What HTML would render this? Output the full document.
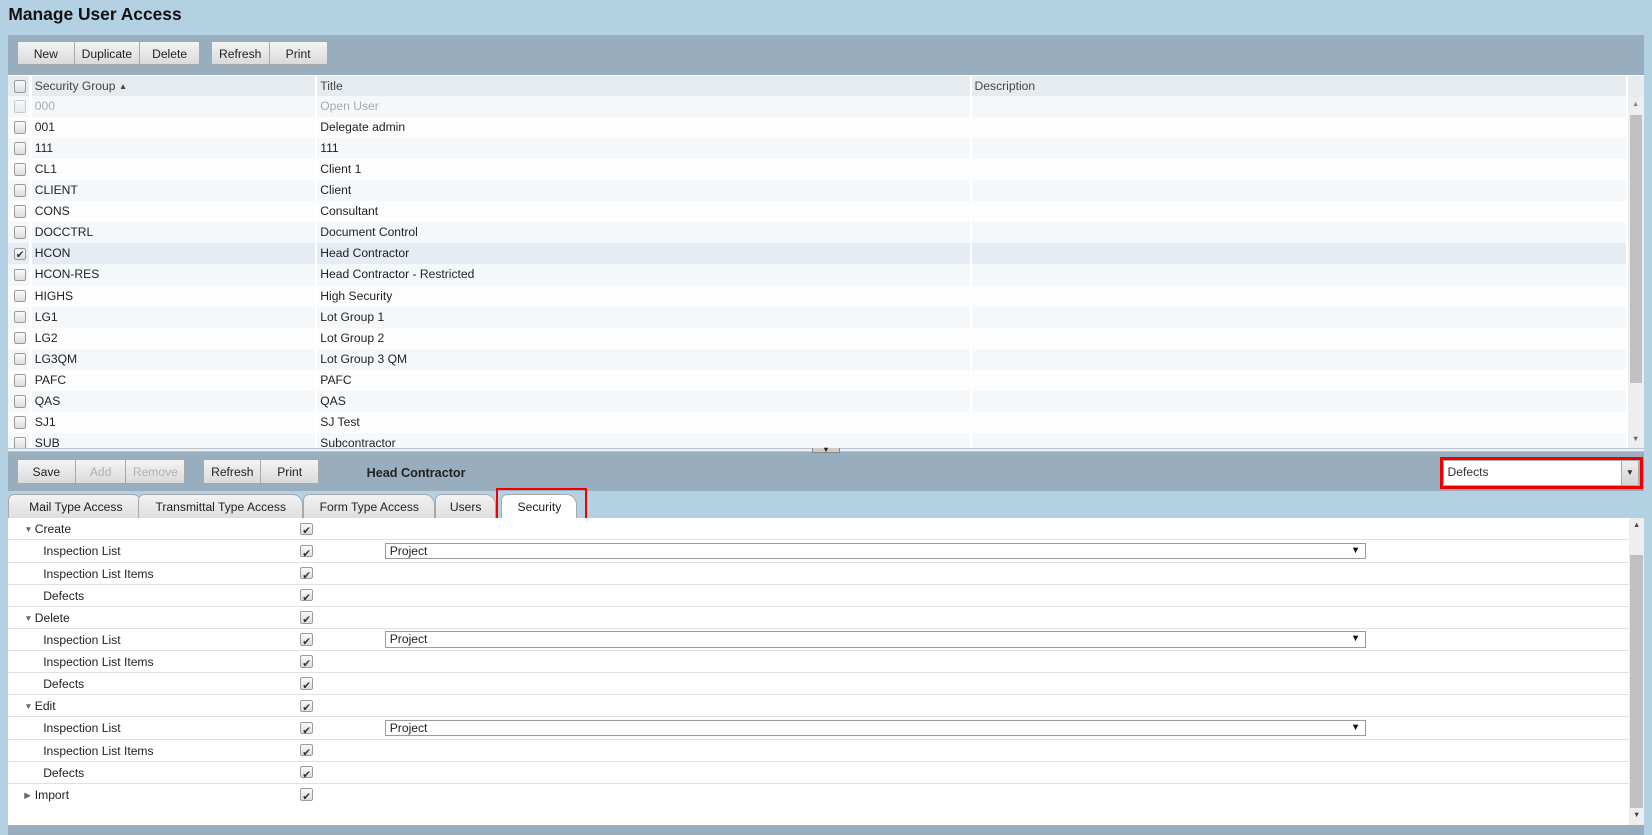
<!DOCTYPE html>
<html><head><meta charset="utf-8"><style>
html{zoom:1.05357}
body{margin:0;width:1568px;height:793px;background:#b4d1e4;font-family:"Liberation Sans",sans-serif;font-size:11.5px;color:#222;position:relative;overflow:hidden}
.abs{position:absolute}
h1{position:absolute;left:8px;top:4px;margin:0;font-size:16.5px;font-weight:bold;color:#111}
.panel{left:8px;top:33px;width:1552px;height:760px;background:#98aebf}
.btn{position:absolute;top:0;height:23px;line-height:23px;text-align:center;background:linear-gradient(#f4f4f4,#dadada);border:1px solid #a8a8a8;box-sizing:border-box;color:#222;font-size:11.5px}
.dis{color:#b0b0b0}
.grid{left:8px;top:71px;width:1552px;height:354px;background:#fdfdfd;overflow:hidden}
.row{position:absolute;left:0;width:1537px;height:20px;line-height:20px}
.row span{position:absolute;top:0}
.cb{position:absolute;width:10px;height:10px;border:1px solid #9a9a9a;border-radius:2px;background:linear-gradient(#fafafa,#dcdcdc)}
.cb.k::after{content:"✔";position:absolute;left:1px;top:-3px;font-size:10px;color:#333}
.sep{position:absolute;top:0;width:2px;height:354px;background:#fff}
.srow{position:absolute;left:0;width:1538px;height:21px;line-height:21px;border-bottom:1px solid #dde1e4;box-sizing:border-box}
.srow span{position:absolute;top:0}
.sel{position:absolute;left:357px;top:2px;width:932px;height:16px;border:1px solid #9a9a9a;background:#fff;box-sizing:border-box;line-height:14px;padding-left:4px}
.sel::after{content:"▼";position:absolute;right:5px;top:0;font-size:9px;color:#111}
.tab{position:absolute;top:469px;height:23px;line-height:23px;background:linear-gradient(#f2f2f2,#dedede);border:1px solid #a8a8a8;border-bottom:none;border-radius:6px 10px 0 0;box-sizing:border-box;text-align:center}
</style></head><body>
<h1>Manage User Access</h1>
<div class="abs panel"></div>
<div class="abs" style="left:16px;top:39px">
<div class="btn" style="left:0;width:55px">New</div>
<div class="btn" style="left:54px;width:63px">Duplicate</div>
<div class="btn" style="left:116px;width:58px">Delete</div>
<div class="btn" style="left:184px;width:56px">Refresh</div>
<div class="btn" style="left:239px;width:56px">Print</div>
</div>
<div class="abs grid">
<div class="row" style="top:1px;background:#e6ebef;width:1552px;color:#444"><div class="cb" style="left:5px;top:4px"></div><span style="left:25px">Security Group <span style="position:relative;font-size:8px;top:-1px">▲</span></span><span style="left:296px">Title</span><span style="left:917px">Description</span></div>
<div style="position:absolute;left:1537px;top:21px;width:15px;height:333px;background:#eee"><div style="position:absolute;left:4px;top:2px;font-size:7px;color:#888">▲</div><div style="position:absolute;left:2px;top:17px;width:12px;height:255px;background:#c0c0c0"></div><div style="position:absolute;left:4px;top:320px;font-size:7px;color:#666">▼</div></div>
<div id="rows"></div>
<div class="sep" style="left:20px"></div><div class="sep" style="left:291px"></div><div class="sep" style="left:913px"></div><div class="sep" style="left:1535px"></div>
</div>
<div class="abs" style="left:8px;top:425px;width:1552px;height:4px;background:#eef1f4;border-top:1px solid #b8c4d0;border-bottom:1px solid #b8c4d0;box-sizing:border-box"></div>
<div class="abs" style="left:771px;top:425px;width:26px;height:5px;background:#ccc;border:1px solid #888;border-top:none;box-sizing:border-box;font-size:7px;line-height:4px;text-align:center">▼</div>
<div class="abs" style="left:16px;top:436px">
<div class="btn" style="left:0;width:56px">Save</div>
<div class="btn dis" style="left:55px;width:49px">Add</div>
<div class="btn dis" style="left:103px;width:57px">Remove</div>
<div class="btn" style="left:177px;width:55px">Refresh</div>
<div class="btn" style="left:231px;width:56px">Print</div>
</div>
<div class="abs" style="left:348px;top:442px;font-weight:bold;font-size:12px">Head Contractor</div>
<div class="abs" style="left:1367px;top:434px;width:192px;height:30px;border:3px solid #e00;box-sizing:border-box"></div>
<div class="abs" style="left:1370px;top:437px;width:186px;height:24px;background:#fff;border:1px solid #aaa;box-sizing:border-box;line-height:22px;padding-left:3px;color:#333">Defects<div style="position:absolute;right:0;top:0;width:16px;height:22px;background:linear-gradient(#eee,#d4d4d4);border-left:1px solid #aaa;font-size:8px;text-align:center">▼</div></div>
<div class="abs" style="left:8px;top:466px;width:1552px;height:26px;background:#b4d1e4"></div>
<div class="tab" style="left:8px;width:128px">Mail Type Access</div>
<div class="tab" style="left:131px;width:157px">Transmittal Type Access</div>
<div class="tab" style="left:288px;width:125px">Form Type Access</div>
<div class="tab" style="left:413px;width:58px">Users</div>
<div class="tab" style="left:476px;width:72px;background:#fff;height:24px">Security</div>
<div class="abs" style="left:471px;top:463px;width:86px;height:36px;border:2px solid #e00;box-sizing:border-box"></div>
<div class="abs" style="left:8px;top:492px;width:1552px;height:291px;background:#fff" id="sec">
<div style="position:absolute;left:1538px;top:0;width:14px;height:291px;background:#eee"><div style="position:absolute;left:4px;top:2px;font-size:7px;color:#444">▲</div><div style="position:absolute;left:1px;top:35px;width:12px;height:240px;background:#c0c0c0"></div><div style="position:absolute;left:4px;top:277px;font-size:7px;color:#444">▼</div></div>
</div>
<script>
var d=[["000","Open User"],["001","Delegate admin"],["111","111"],["CL1","Client 1"],["CLIENT","Client"],["CONS","Consultant"],["DOCCTRL","Document Control"],["HCON","Head Contractor"],["HCON-RES","Head Contractor - Restricted"],["HIGHS","High Security"],["LG1","Lot Group 1"],["LG2","Lot Group 2"],["LG3QM","Lot Group 3 QM"],["PAFC","PAFC"],["QAS","QAS"],["SJ1","SJ Test"],["SUB","Subcontractor"],["SUP","Supplier"]];
var h="";d.forEach(function(r,i){var bg=i==7?"#e5ecf4":(i%2==0?"#f4f8fb":"#fdfdfd");var c=i==0?"color:#aaa":"";h+='<div class="row" style="top:'+(20+i*20)+'px;background:'+bg+';'+c+'"><div class="cb'+(i==7?' k':'')+'" style="left:5px;top:4px;'+(i==0?'opacity:.5':'')+'"></div><span style="left:25px">'+r[0]+'</span><span style="left:296px">'+r[1]+'</span></div>';});
document.getElementById("rows").innerHTML=h;
var s=[["Create",0],["Inspection List",1],["Inspection List Items",1],["Defects",1],["Delete",0],["Inspection List",1],["Inspection List Items",1],["Defects",1],["Edit",0],["Inspection List",1],["Inspection List Items",1],["Defects",1],["Import",2]];
var g="";s.forEach(function(r,i){var lbl=r[1]==1?'<span style="left:33px">'+r[0]+'</span>':'<span style="left:15px;font-size:8px;color:#666">'+(r[1]==2?'▶':'▼')+'</span><span style="left:25px">'+r[0]+'</span>';var sel=(r[1]==1&&r[0]=="Inspection List")?'<div class="sel">Project</div>':'';g+='<div class="srow" style="top:'+(i*21)+'px'+(i==12?';border:none':'')+'">'+lbl+'<div class="cb k" style="left:277px;top:4px"></div>'+sel+'</div>';});
document.getElementById("sec").insertAdjacentHTML("beforeend",g);
</script>
</body></html>
